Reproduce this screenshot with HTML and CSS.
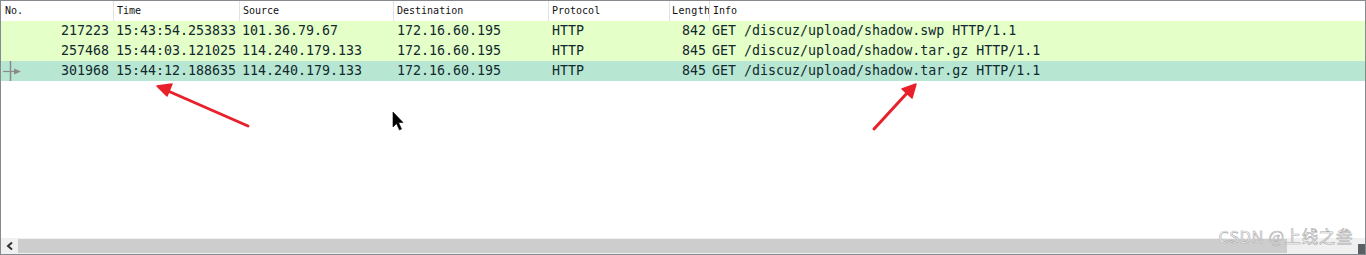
FILE: index.html
```html
<!DOCTYPE html>
<html>
<head>
<meta charset="utf-8">
<link rel="stylesheet" href="styles.css">
</head>
<body>
<div class="frame">
  <div class="grid head">
    <div class="hc">No.</div>
    <div class="hc sep">Time</div>
    <div class="hc sep">Source</div>
    <div class="hc sep">Destination</div>
    <div class="hc sep">Protocol</div>
    <div class="hc sep clip">Length</div>
    <div class="hc sep">Info</div>
  </div>
  <div class="grid row http">
    <div class="c num">217223</div>
    <div class="c t">15:43:54.253833</div>
    <div class="c s">101.36.79.67</div>
    <div class="c d">172.16.60.195</div>
    <div class="c p">HTTP</div>
    <div class="c num len">842</div>
    <div class="c i">GET /discuz/upload/shadow.swp HTTP/1.1</div>
  </div>
  <div class="grid row http">
    <div class="c num">257468</div>
    <div class="c t">15:44:03.121025</div>
    <div class="c s">114.240.179.133</div>
    <div class="c d">172.16.60.195</div>
    <div class="c p">HTTP</div>
    <div class="c num len">845</div>
    <div class="c i">GET /discuz/upload/shadow.tar.gz HTTP/1.1</div>
  </div>
  <div class="grid row sel">
    <div class="c num first">
      <svg class="marker" width="22" height="20" viewBox="0 0 22 20"><path d="M9.5 0V20" stroke="#8a8a8a" stroke-width="1.5"/><path d="M2 10.5H15" stroke="#8a8a8a" stroke-width="1.2"/><path d="M13 7.5L20 10.5L13 13.5Z" fill="#8a8a8a"/></svg>
      301968</div>
    <div class="c t">15:44:12.188635</div>
    <div class="c s">114.240.179.133</div>
    <div class="c d">172.16.60.195</div>
    <div class="c p">HTTP</div>
    <div class="c num len">845</div>
    <div class="c i">GET /discuz/upload/shadow.tar.gz HTTP/1.1</div>
  </div>
  <div class="blank"></div>
  <div class="hscroll">
    <div class="btn"><svg width="10" height="10" viewBox="0 0 10 10"><path d="M7 1.5L3 5L7 8.5" fill="none" stroke="#333" stroke-width="2"/></svg></div>
    <div class="thumb"></div>
    <div class="track"></div>
    <div class="grip"></div>
  </div>
  <svg class="overlay" width="1366" height="255" viewBox="0 0 1366 255">
    <path d="M248 126L168 91" stroke="#e8202a" stroke-width="3" stroke-linecap="round"/>
    <path d="M157 86L172 84L167 96Z" fill="#e8202a" stroke="#e8202a" stroke-width="1.5" stroke-linejoin="round"/>
    <path d="M874 129L908 92" stroke="#e8202a" stroke-width="3" stroke-linecap="round"/>
    <path d="M916 84L912 98L902 89Z" fill="#e8202a" stroke="#e8202a" stroke-width="1.5" stroke-linejoin="round"/>
    <path d="M393 112L393 127L396.5 123.5L399.5 130L401.5 129L398.5 122.5L403 122.5Z" fill="#000" stroke="#000" stroke-width="0.6"/>
  </svg>
  <div class="wm">CSDN @上线之叁</div>
</div>
</body>
</html>
```

FILE: styles.css
```css
html, body {
  margin: 0;
  padding: 0;
  background: #fff;
}
.frame {
  position: relative;
  width: 1366px;
  height: 255px;
  box-sizing: border-box;
  border: 1px solid #868a8f;
  display: flex;
  flex-direction: column;
  overflow: hidden;
}
.grid {
  display: grid;
  grid-template-columns: 112px 126px 154px 155px 121px 40px 1fr;
  height: 20px;
}
.head {
  background: #fff;
}
.hc {
  font-family: "DejaVu Sans Mono", "Liberation Mono", monospace;
  font-size: 10px;
  line-height: 20px;
  color: #111;
  padding-left: 4px;
  white-space: nowrap;
  overflow: hidden;
}
.hc.sep {
  border-left: 1px solid #e3e3e3;
  padding-left: 3px;
}
.hc.clip {
  text-overflow: clip;
  padding-left: 2px;
  letter-spacing: 0.4px;
}
.row {
  font-family: "DejaVu Sans Mono", "Liberation Mono", monospace;
  font-size: 13.3px;
  line-height: 20px;
  color: #12272e;
}
.http { background: #e4ffc8; }
.sel { background: #b7e7d2; }
.c {
  white-space: nowrap;
  overflow: hidden;
  padding-left: 3px;
}
.num {
  text-align: right;
  padding-right: 4px;
  padding-left: 0;
}
.len { padding-right: 3px; }
.d { padding-left: 4px; }
.p { padding-left: 4px; }
.i { padding-left: 3px; }
.first { position: relative; }
.marker {
  position: absolute;
  left: 0;
  top: 0;
}
.blank { flex: 1; }
.hscroll {
  height: 16px;
  display: flex;
  background: #f0f0f0;
}
.btn {
  width: 17px;
  display: flex;
  align-items: center;
  justify-content: center;
}
.thumb {
  width: 1269px;
  background: #cdcdcd;
  margin: 1px 0;
}
.track { flex: 1; }
.grip {
  width: 7px;
  background: #5a5f66;
  margin-top: 6px;
}
.overlay {
  position: absolute;
  left: -1px;
  top: -1px;
  pointer-events: none;
}
.wm {
  position: absolute;
  right: 12px;
  top: 224px;
  font-family: "Noto Sans CJK SC", "Noto Sans", sans-serif;
  font-size: 16.5px;
  line-height: 22px;
  color: rgba(255,255,255,0.9);
  -webkit-text-stroke: 0.6px #a8a8a8;
  letter-spacing: 0.6px;
}
```
